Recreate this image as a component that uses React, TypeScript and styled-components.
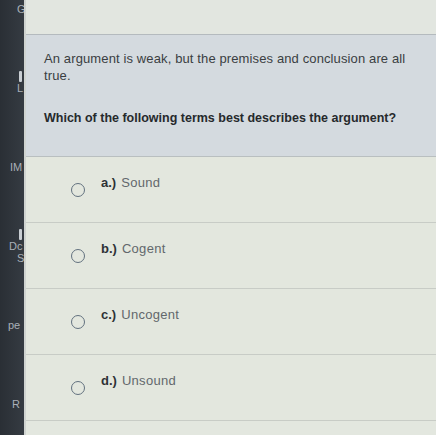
import React, { ReactElement } from 'react';
import styled, { createGlobalStyle } from 'styled-components';

const GlobalStyle = createGlobalStyle`
  html, body {
    margin: 0;
    padding: 0;
    background: #2d3238;
  }
  body {
    font-family: 'Liberation Sans', Arial, sans-serif;
  }
`;

const Page = styled.div`
  display: flex;
  width: 436px;
  height: 435px;
  overflow: hidden;
`;

const Sidebar = styled.nav`
  width: 24px;
  flex-shrink: 0;
  display: flex;
  flex-direction: column;
  background: linear-gradient(90deg, #2a2f35 0%, #353b42 100%);
  overflow: hidden;
  color: #a9b0b8;
  font-size: 11px;
`;

const NavItem = styled.div<{ $indent: number }>`
  height: 79px;
  flex-shrink: 0;
  display: flex;
  flex-direction: column;
  align-items: flex-start;
  padding: 4px 0 0 ${(p) => p.$indent}px;
  box-sizing: border-box;
  white-space: nowrap;
  line-height: 12px;

  &:first-child {
    margin-top: -12px;
  }
`;

const NavIcon = styled.span<{ $show: boolean }>`
  align-self: flex-end;
  width: 3px;
  height: 11px;
  margin-right: 2px;
  background: ${(p) => (p.$show ? '#c9ced3' : 'transparent')};
  border-radius: 1px;
`;

const NavSub = styled.span`
  padding-left: 8px;
`;

const Main = styled.div`
  flex: 1;
  display: flex;
  flex-direction: column;
  background: #e3e7df;
  border-left: 2px solid #cfd3d0;
`;

const TopStrip = styled.div`
  height: 34px;
  flex-shrink: 0;
  background: #e2e6e0;
  border-bottom: 1px solid #b4babe;
`;

const QuestionBox = styled.div`
  height: 122px;
  flex-shrink: 0;
  box-sizing: border-box;
  padding: 15px 10px 0 18px;
  background: #d4dadf;
  border-bottom: 1px solid #b9bfc0;
  color: #3a3e42;
`;

const Prompt = styled.p`
  margin: 0;
  font-size: 13px;
  letter-spacing: 0.12px;
  line-height: 17px;
`;

const Ask = styled.p`
  margin: 25px 0 0;
  font-size: 12.5px;
  font-weight: bold;
  line-height: 18px;
  color: #26292c;
`;

const OptionRow = styled.div`
  height: 66px;
  flex-shrink: 0;
  display: flex;
  align-items: flex-start;
  padding: 18px 0 0 45px;
  box-sizing: border-box;
  border-bottom: 1px solid #c8ccc6;
  background: #e3e7de;
`;

const Radio = styled.span`
  width: 12px;
  height: 12px;
  margin-top: 8px;
  border: 1.5px solid #62717e;
  border-radius: 50%;
  flex-shrink: 0;
`;

const OptionText = styled.span`
  margin-left: 16px;
  font-size: 13px;
  letter-spacing: 0.3px;
  color: #62676c;
`;

const Letter = styled.b`
  color: #2e3236;
  margin-right: 5px;
  letter-spacing: 0;
`;

const nav = [
  { label: 'G', indent: 17, icon: false },
  { label: 'L', indent: 17, icon: true },
  { label: 'IM', indent: 10, icon: false },
  { label: 'Dc', indent: 9, icon: true, sub: 'S' },
  { label: 'pe', indent: 8, icon: false },
  { label: 'R', indent: 12, icon: false },
];

const options = ['Sound', 'Cogent', 'Uncogent', 'Unsound'];
const letters = ['a', 'b', 'c', 'd'];

export default function App(): ReactElement {
  return (
    <Page>
      <GlobalStyle />
      <Sidebar>
        {nav.map((n) => (
          <NavItem key={n.label} $indent={n.indent}>
            <NavIcon $show={n.icon} />
            <span>{n.label}</span>
            {n.sub && <NavSub>{n.sub}</NavSub>}
          </NavItem>
        ))}
      </Sidebar>
      <Main>
        <TopStrip />
        <QuestionBox>
          <Prompt>An argument is weak, but the premises and conclusion are all true.</Prompt>
          <Ask>Which of the following terms best describes the argument?</Ask>
        </QuestionBox>
        {options.map((o, i) => (
          <OptionRow key={o}>
            <Radio />
            <OptionText>
              <Letter>{letters[i]}.)</Letter>
              {o}
            </OptionText>
          </OptionRow>
        ))}
      </Main>
    </Page>
  );
}
